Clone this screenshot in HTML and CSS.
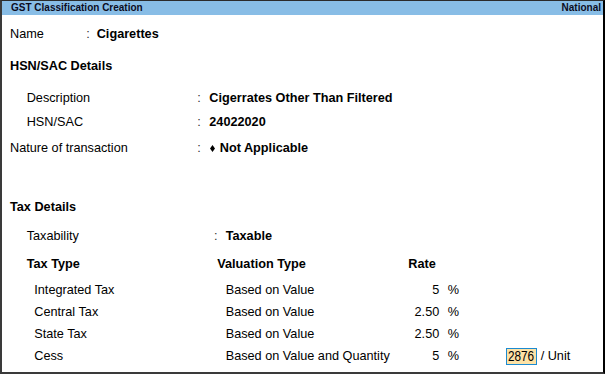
FILE: index.html
```html
<!DOCTYPE html>
<html>
<head>
<meta charset="utf-8">
<link rel="stylesheet" href="styles.css">
</head>
<body>
<div class="frame">
  <div class="titlebar"><span>GST Classification Creation</span><span>National</span></div>
  <div class="content">
    <div class="row">
      <span class="lbl w-name">Name</span><span class="colon c-name">:</span><span class="val">Cigarettes</span>
    </div>
    <div class="section s-hsn">HSN/SAC Details</div>
    <div class="row indent m-desc">
      <span class="lbl w-ind">Description</span><span class="colon c-std">:</span><span class="val">Cigerrates Other Than Filtered</span>
    </div>
    <div class="row indent m-hsn">
      <span class="lbl w-ind">HSN/SAC</span><span class="colon c-std">:</span><span class="val">24022020</span>
    </div>
    <div class="row m-nature">
      <span class="lbl w-nature">Nature of transaction</span><span class="colon c-std">:</span><svg class="diamond" width="5" height="7" viewBox="0 0 5 7"><polygon points="2.5,0 5,3.5 2.5,7 0,3.5" fill="#000"/></svg><span class="val">Not Applicable</span>
    </div>
    <div class="section s-tax">Tax Details</div>
    <div class="row indent m-taxability">
      <span class="lbl w-taxability">Taxability</span><span class="colon c-taxability">:</span><span class="val">Taxable</span>
    </div>
    <div class="trow thead">
      <span class="hd">Tax Type</span>
      <span class="hd">Valuation Type</span>
      <span class="hd hd-rate">Rate</span>
      <span></span>
      <span></span>
    </div>
    <div class="trow first">
      <span class="tname">Integrated Tax</span>
      <span class="tval">Based on Value</span>
      <span class="trate">5</span>
      <span class="tpct">%</span>
      <span></span>
    </div>
    <div class="trow">
      <span class="tname">Central Tax</span>
      <span class="tval">Based on Value</span>
      <span class="trate">2.50</span>
      <span class="tpct">%</span>
      <span></span>
    </div>
    <div class="trow">
      <span class="tname">State Tax</span>
      <span class="tval">Based on Value</span>
      <span class="trate">2.50</span>
      <span class="tpct">%</span>
      <span></span>
    </div>
    <div class="trow">
      <span class="tname">Cess</span>
      <span class="tval">Based on Value and Quantity</span>
      <span class="trate">5</span>
      <span class="tpct">%</span>
      <span class="qtycell"><span class="qty"><span class="qtytext">2876</span></span><span class="unit">/ Unit</span></span>
    </div>
  </div>
</div>
</body>
</html>
```

FILE: styles.css
```css
body {
  margin: 0;
  background: #ffffff;
  font-family: "Liberation Sans", Arial, sans-serif;
  font-size: 12.7px;
  color: #000000;
}

.frame {
  box-sizing: border-box;
  width: 605px;
  height: 374px;
  border-top: 1px solid #2b2b2b;
  border-left: 2px solid #3a3a3a;
  border-right: 2px solid #000000;
  border-bottom: 2px solid #3a3a3a;
  background: #ffffff;
}

.titlebar {
  display: flex;
  justify-content: space-between;
  height: 14px;
  line-height: 14px;
  background: #88bde6;
  font-size: 10px;
  font-weight: bold;
  color: #0c0c1e;
  padding: 0 2px 0 9px;
}

.content {
  padding: 11.8px 0 0 8px;
  line-height: 15px;
}

.row {
  display: flex;
  align-items: baseline;
  height: 15px;
  white-space: nowrap;
}

.indent {
  padding-left: 16.7px;
}

.lbl {
  display: inline-block;
}

.w-name { width: 76.2px; }
.w-ind { width: 170.5px; }
.w-nature { width: 187.2px; }
.w-taxability { width: 187.2px; }

.colon {
  display: inline-block;
  color: #333333;
}

.c-name { width: 10.5px; }
.c-std { width: 12.1px; }
.c-taxability { width: 11.8px; }

.val {
  font-weight: bold;
}

.diamond {
  align-self: center;
  margin: 0 4.3px 0 1.2px;
}

.section {
  font-weight: bold;
  height: 15px;
}

.s-hsn { margin-top: 17.4px; }
.m-desc { margin-top: 16.4px; }
.m-hsn { margin-top: 9.3px; }
.m-nature { margin-top: 10.7px; }
.s-tax { margin-top: 44.3px; }
.m-taxability { margin-top: 14.3px; }

.trow {
  display: grid;
  grid-template-columns: 190.6px 177.7px 44.3px 66.7px auto;
  padding-left: 16.7px;
  height: 15px;
  margin-top: 6.9px;
  white-space: nowrap;
}

.trow.thead { margin-top: 13px; }
.trow.first { margin-top: 11px; }

.hd { font-weight: bold; }
.hd-rate { padding-left: 13.3px; }

.tname { padding-left: 7.6px; }
.tval { padding-left: 8.4px; }
.trate { text-align: right; }
.tpct { padding-left: 8.4px; }

.qtycell {
  display: flex;
  align-items: center;
}

.qty {
  display: inline-block;
  box-sizing: border-box;
  width: 31.6px;
  height: 17px;
  line-height: 15px;
  margin: -1px 0 -1px -0.3px;
  padding: 0 0 0 1.8px;
  border: 1px solid #1c8ad0;
  background: #fde2a6;
  overflow: hidden;
}

.qtytext {
  display: inline-block;
  font-size: 14px;
  transform: scaleX(0.84);
  transform-origin: 0 50%;
}

.unit {
  margin-left: 3.4px;
}
```
